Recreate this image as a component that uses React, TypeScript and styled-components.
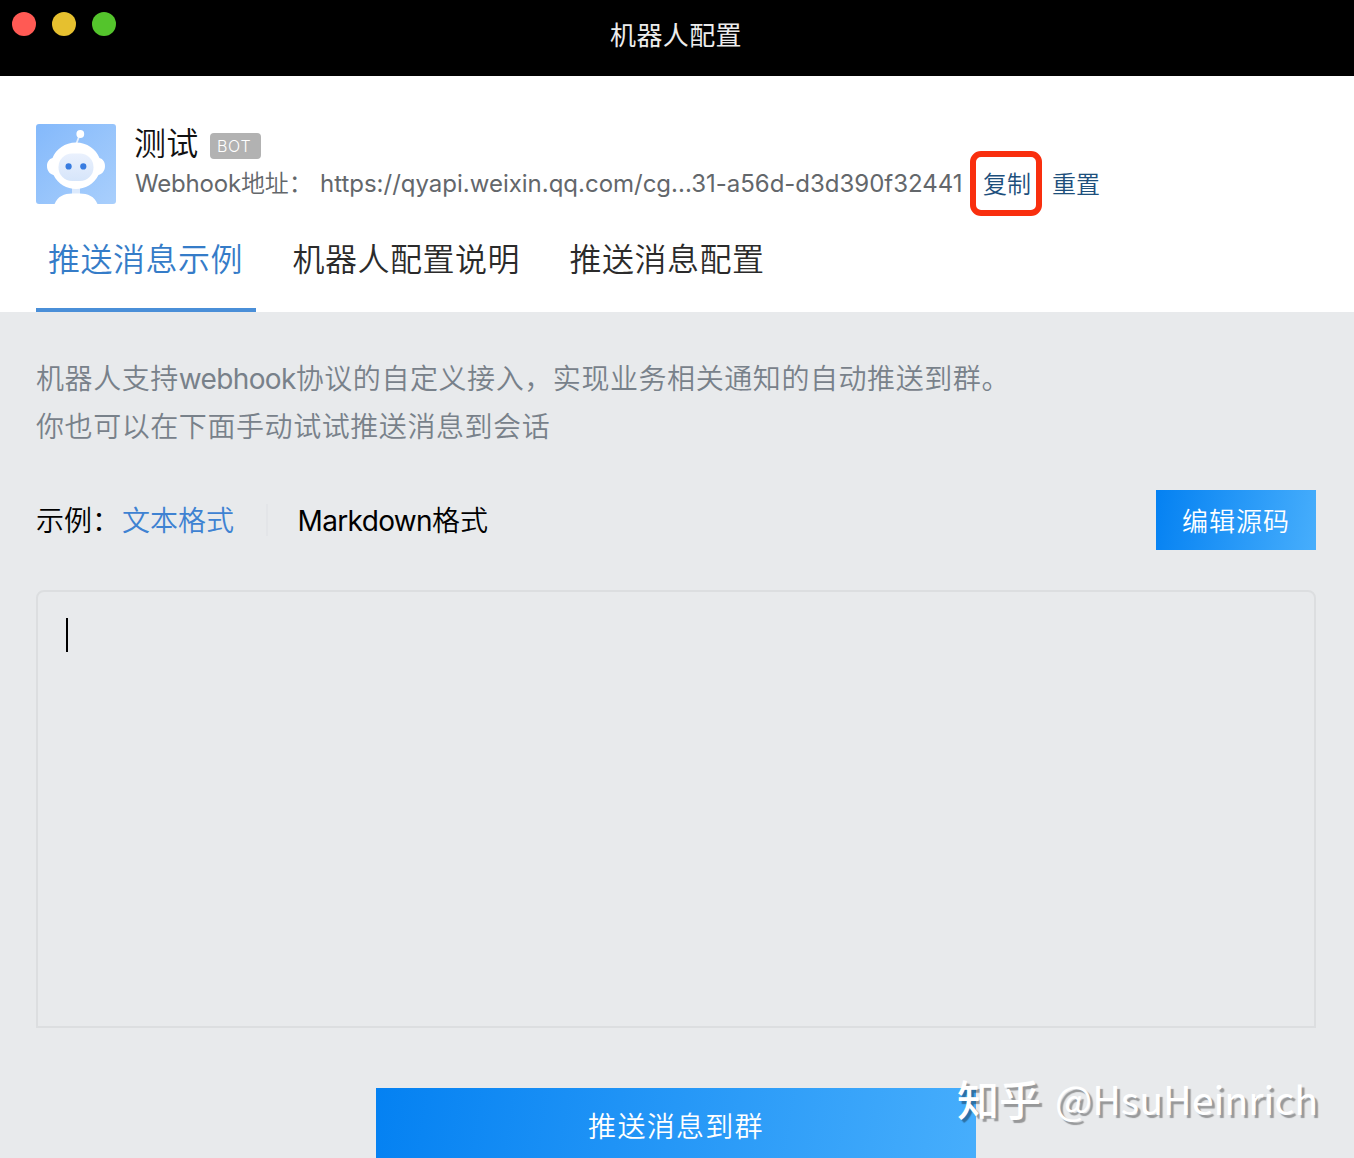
import React, { useState } from "react";
import styled, { createGlobalStyle } from "styled-components";

const GlobalStyle = createGlobalStyle`
  * { box-sizing: border-box; }
  body { margin: 0; background: #e8eaec; }
`;

const Window = styled.div`
  position: relative;
  display: flex;
  flex-direction: column;
  width: 1354px;
  height: 1158px;
  overflow: hidden;
  background: #e8eaec;
  color: #000;
  font-family: Inter, "Noto Sans CJK SC", sans-serif;
  font-weight: 350;
  white-space: nowrap;
`;

const TitleBar = styled.header`
  position: relative;
  display: flex;
  justify-content: center;
  flex: none;
  height: 76px;
  background: #000;
`;

const Lights = styled.div`
  position: absolute;
  left: 12px;
  top: 12px;
  display: flex;
  gap: 16px;
`;

const Light = styled.span<{ $color: string }>`
  width: 24px;
  height: 24px;
  border-radius: 50%;
  background: ${(p) => p.$color};
`;

const Title = styled.h1`
  margin: 0;
  padding: 16px 2px 0 0;
  font-size: 26px;
  font-weight: 400;
  line-height: 40px;
  letter-spacing: 0.4px;
  color: #ececec;
`;

const Head = styled.section`
  display: flex;
  flex-direction: column;
  flex: none;
  height: 236px;
  padding: 48px 36px 0;
  background: #fff;
`;

const Profile = styled.div`
  display: flex;
  gap: 19px;
  height: 80px;
`;

const Details = styled.div`
  display: flex;
  flex-direction: column;
`;

const NameRow = styled.div`
  display: flex;
  height: 40px;
`;

const Name = styled.span`
  width: 75px;
  margin-left: -1px;
  font-size: 32px;
  line-height: 40px;
  letter-spacing: 0.2px;
  color: #111;
`;

const BotTag = styled.span`
  width: 51px;
  height: 26px;
  margin: 9px 0 0 1px;
  padding-left: 7px;
  border-radius: 4px;
  background: #b2b2b2;
  color: #fff;
  font-size: 16px;
  line-height: 26px;
  letter-spacing: 0.7px;
`;

const HookRow = styled.div`
  display: flex;
  height: 40px;
  font-size: 24px;
  line-height: 40px;
  padding-top: 1px;
  color: #63676b;
`;

const HookLabel = styled.span`
  width: 185px;
  margin-top: -1px;
`;

const HookUrl = styled.span`
  width: 663px;
  margin-top: -1px;
  font-weight: 400;
  letter-spacing: -0.01px;
`;

const Action = styled.a`
  position: relative;
  margin-right: 21px;
  color: #1d4f7c;
`;

const Highlight = styled.span`
  position: absolute;
  left: -13px;
  top: -14px;
  width: 72px;
  height: 65px;
  border: 6px solid #f92f0e;
  border-radius: 11px;
`;

const Tabs = styled.nav`
  display: flex;
  gap: 25px;
  height: 108px;
`;

const Tab = styled.button<{ $active: boolean }>`
  padding: 31px 12.5px 0 12px;
  border: 0;
  border-bottom: 4px solid ${(p) => (p.$active ? "#4a8fd8" : "transparent")};
  background: none;
  color: ${(p) => (p.$active ? "#357cc8" : "#2b2b2b")};
  display: flex;
  font: inherit;
  font-size: 32px;
  line-height: 50px;
  letter-spacing: 0.5px;
`;

const Body = styled.main`
  display: flex;
  flex-direction: column;
  padding: 43px 38px 0 36px;
`;

const Intro = styled.p`
  margin: 0;
  font-size: 28px;
  line-height: 48px;
  letter-spacing: 0.57px;
  color: #78818a;
`;

const Latin = styled.span<{ $spacing?: number }>`
  font-weight: 400;
  letter-spacing: ${(p) => p.$spacing ?? -0.65}px;
`;

const FormatRow = styled.div`
  display: flex;
  align-items: center;
  height: 60px;
  margin-top: 39px;
  font-size: 28px;
  line-height: 60px;
`;

const FormatLabel = styled.span`
  width: 86px;
  padding-top: 2px;
`;

const Format = styled.span<{ $active?: boolean }>`
  padding-top: ${(p) => (p.$active ? 2 : 1)}px;
  color: ${(p) => (p.$active ? "#3e82d2" : "#000")};
`;

const Divider = styled.span`
  width: 2px;
  height: 32px;
  margin: 0 29.5px 0 32px;
  background: #e3e5e8;
`;

const PrimaryButton = styled.button<{ $wide?: boolean }>`
  flex: none;
  align-self: center;
  width: ${(p) => (p.$wide ? 600 : 160)}px;
  height: ${(p) => (p.$wide ? 80 : 60)}px;
  margin: ${(p) => (p.$wide ? "60px 0 0" : "0 0 0 auto")};
  padding: ${(p) => (p.$wide ? "0 0 2px" : "3px 0 0")};
  border: 0;
  background: linear-gradient(100deg, #0481f2, #47aefc);
  color: #fff;
  font: inherit;
  font-size: ${(p) => (p.$wide ? 28 : 26)}px;
  line-height: ${(p) => (p.$wide ? 76 : 57)}px;
  letter-spacing: ${(p) => (p.$wide ? 1.3 : 1)}px;
`;

const Editor = styled.div`
  height: 438px;
  margin-top: 40px;
  padding: 26px 28px;
  border: 2px solid #dcdee0;
  border-radius: 8px 8px 0 0;
`;

const Caret = styled.div`
  width: 2px;
  height: 34px;
  background: #000;
`;

const Watermark = styled.div`
  position: absolute;
  left: 957px;
  top: 1068px;
  display: flex;
  gap: 14px;
  font-family: "Noto Sans CJK SC", sans-serif;
  font-size: 39.3px;
  line-height: 60px;
  font-weight: 400;
  color: #fff;
  text-shadow: 3px 3px 1px rgba(0, 0, 0, 0.35);
`;

const Brand = styled.span`
  font-weight: 500;
  font-size: 42px;
`;

const RobotAvatar = () => (
  <svg width="80" height="80" viewBox="0 0 80 80">
    <defs>
      <linearGradient id="sky" x1="0" y1="0" x2="1" y2="1">
        <stop offset="0" stopColor="#84b9fb" />
        <stop offset="1" stopColor="#a9cffc" />
      </linearGradient>
      <linearGradient id="face" x1="0" y1="0" x2="0" y2="1">
        <stop offset="0" stopColor="#eaf1fd" />
        <stop offset="1" stopColor="#d6e5fa" />
      </linearGradient>
      <clipPath id="frame"><rect width="80" height="80" rx="3" /></clipPath>
    </defs>
    <g clipPath="url(#frame)">
      <rect width="80" height="80" fill="url(#sky)" />
      <path d="M44 10 L39.5 22" stroke="#e4effe" strokeWidth="1.8" />
      <circle cx="44.3" cy="10" r="3.9" fill="#fff" />
      <rect x="36" y="62" width="8" height="9" fill="#dceafd" />
      <path d="M18 82 C20 73 28 69.5 36 69.5 H44 C52 69.5 60 73 62 82 Z" fill="#fff" />
      <path d="M40 18.5 C51 18.5 60 25 63.5 34 C67 35 69 38 69 42 C69 46.5 66.5 50 62.5 51 C58 60 49 65 40 65 C31 65 22 60 17.5 51 C13.5 50 11 46.5 11 42 C11 38 13 35 16.5 34 C20 25 29 18.5 40 18.5 Z" fill="#fff" />
      <rect x="22.5" y="29.5" width="35" height="27.5" rx="13.5" fill="url(#face)" />
      <circle cx="32.6" cy="42.4" r="3.1" fill="#387ce0" />
      <circle cx="47.3" cy="42.4" r="3.1" fill="#387ce0" />
    </g>
  </svg>
);

const TAB_LABELS = ["推送消息示例", "机器人配置说明", "推送消息配置"];

export default function App() {
  const [tab, setTab] = useState(0);
  return (
    <Window>
      <GlobalStyle />
      <TitleBar>
        <Lights>
          <Light $color="#ff5a54" />
          <Light $color="#e6c02f" />
          <Light $color="#54c42c" />
        </Lights>
        <Title>机器人配置</Title>
      </TitleBar>
      <Head>
        <Profile>
          <RobotAvatar />
          <Details>
            <NameRow>
              <Name>测试</Name>
              <BotTag>BOT</BotTag>
            </NameRow>
            <HookRow>
              <HookLabel>
                <Latin $spacing={-0.2}>Webhook</Latin>地址：
              </HookLabel>
              <HookUrl>https://qyapi.weixin.qq.com/cg...31-a56d-d3d390f32441</HookUrl>
              <Action>
                复制
                <Highlight />
              </Action>
              <Action>重置</Action>
            </HookRow>
          </Details>
        </Profile>
        <Tabs>
          {TAB_LABELS.map((label, i) => (
            <Tab key={label} $active={i === tab} onClick={() => setTab(i)}>
              {label}
            </Tab>
          ))}
        </Tabs>
      </Head>
      <Body>
        <Intro>
          机器人支持<Latin>webhook</Latin>协议的自定义接入，实现业务相关通知的自动推送到群。
        </Intro>
        <Intro>你也可以在下面手动试试推送消息到会话</Intro>
        <FormatRow>
          <FormatLabel>示例：</FormatLabel>
          <Format $active>文本格式</Format>
          <Divider />
          <Format>
            <Latin>Markdown</Latin>格式
          </Format>
          <PrimaryButton>编辑源码</PrimaryButton>
        </FormatRow>
        <Editor>
          <Caret />
        </Editor>
        <PrimaryButton $wide>推送消息到群</PrimaryButton>
      </Body>
      <Watermark>
        <Brand>知乎</Brand>
        <span>@HsuHeinrich</span>
      </Watermark>
    </Window>
  );
}
